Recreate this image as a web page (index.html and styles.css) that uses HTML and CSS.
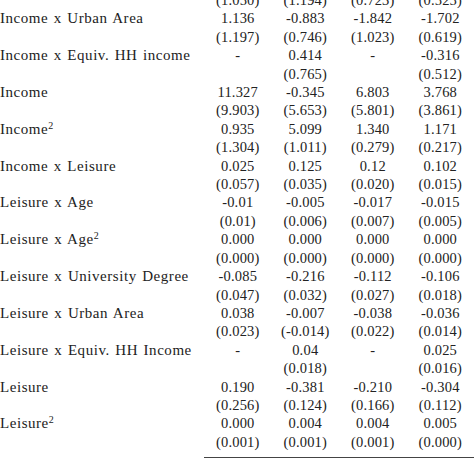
FILE: index.html
```html
<!DOCTYPE html>
<html>
<head>
<meta charset="utf-8">
<link rel="stylesheet" href="styles.css">
</head>
<body>
<table class="reg">
<colgroup><col class="c-label"><col class="c-num"><col class="c-num"><col class="c-num"><col class="c-num"></colgroup>
<tbody>
<tr><td></td><td>(1.050)</td><td>(1.194)</td><td>(0.723)</td><td>(0.525)</td></tr>
<tr><td>Income x Urban Area</td><td>1.136</td><td>-0.883</td><td>-1.842</td><td>-1.702</td></tr>
<tr><td></td><td>(1.197)</td><td>(0.746)</td><td>(1.023)</td><td>(0.619)</td></tr>
<tr><td>Income x Equiv. HH income</td><td>-</td><td>0.414</td><td>-</td><td>-0.316</td></tr>
<tr><td></td><td></td><td>(0.765)</td><td></td><td>(0.512)</td></tr>
<tr><td>Income</td><td>11.327</td><td>-0.345</td><td>6.803</td><td>3.768</td></tr>
<tr><td></td><td>(9.903)</td><td>(5.653)</td><td>(5.801)</td><td>(3.861)</td></tr>
<tr><td>Income<sup>2</sup></td><td>0.935</td><td>5.099</td><td>1.340</td><td>1.171</td></tr>
<tr><td></td><td>(1.304)</td><td>(1.011)</td><td>(0.279)</td><td>(0.217)</td></tr>
<tr><td>Income x Leisure</td><td>0.025</td><td>0.125</td><td>0.12</td><td>0.102</td></tr>
<tr><td></td><td>(0.057)</td><td>(0.035)</td><td>(0.020)</td><td>(0.015)</td></tr>
<tr><td>Leisure x Age</td><td>-0.01</td><td>-0.005</td><td>-0.017</td><td>-0.015</td></tr>
<tr><td></td><td>(0.01)</td><td>(0.006)</td><td>(0.007)</td><td>(0.005)</td></tr>
<tr><td>Leisure x Age<sup>2</sup></td><td>0.000</td><td>0.000</td><td>0.000</td><td>0.000</td></tr>
<tr><td></td><td>(0.000)</td><td>(0.000)</td><td>(0.000)</td><td>(0.000)</td></tr>
<tr><td>Leisure x University Degree</td><td>-0.085</td><td>-0.216</td><td>-0.112</td><td>-0.106</td></tr>
<tr><td></td><td>(0.047)</td><td>(0.032)</td><td>(0.027)</td><td>(0.018)</td></tr>
<tr><td>Leisure x Urban Area</td><td>0.038</td><td>-0.007</td><td>-0.038</td><td>-0.036</td></tr>
<tr><td></td><td>(0.023)</td><td>(-0.014)</td><td>(0.022)</td><td>(0.014)</td></tr>
<tr><td>Leisure x Equiv. HH Income</td><td>-</td><td>0.04</td><td>-</td><td>0.025</td></tr>
<tr><td></td><td></td><td>(0.018)</td><td></td><td>(0.016)</td></tr>
<tr><td>Leisure</td><td>0.190</td><td>-0.381</td><td>-0.210</td><td>-0.304</td></tr>
<tr><td></td><td>(0.256)</td><td>(0.124)</td><td>(0.166)</td><td>(0.112)</td></tr>
<tr><td>Leisure<sup>2</sup></td><td>0.000</td><td>0.004</td><td>0.004</td><td>0.005</td></tr>
<tr class="last"><td></td><td>(0.001)</td><td>(0.001)</td><td>(0.001)</td><td>(0.000)</td></tr>
<tr class="rule"><td></td><td></td><td></td><td></td><td></td></tr>
</tbody>
</table>
</body>
</html>
```
FILE: styles.css
```css
html, body {
  margin: 0;
  padding: 0;
  background: #ffffff;
  overflow: hidden;
}
body {
  font-family: "Liberation Serif", "DejaVu Serif", serif;
  font-size: 14.5px;
  color: #222222;
}
.reg {
  border-collapse: collapse;
  table-layout: fixed;
  width: 474px;
  margin-top: -9px;
}
.c-label { width: 204px; }
.c-num { width: 67.5px; }
.reg td {
  height: 18.4px;
  padding: 0;
  line-height: 18.4px;
  white-space: nowrap;
  text-align: center;
  vertical-align: middle;
  letter-spacing: 0.2px;
}
.reg td:first-child {
  text-align: left;
  font-size: 15px;
  letter-spacing: 0.55px;
  word-spacing: 1.2px;
}
.reg sup {
  font-size: 10px;
  line-height: 0;
  vertical-align: 5px;
  letter-spacing: 0;
}
.reg .rule td {
  height: 6px;
  line-height: 6px;
}
.reg .rule td + td {
  border-bottom: 1px solid #444444;
}
```
